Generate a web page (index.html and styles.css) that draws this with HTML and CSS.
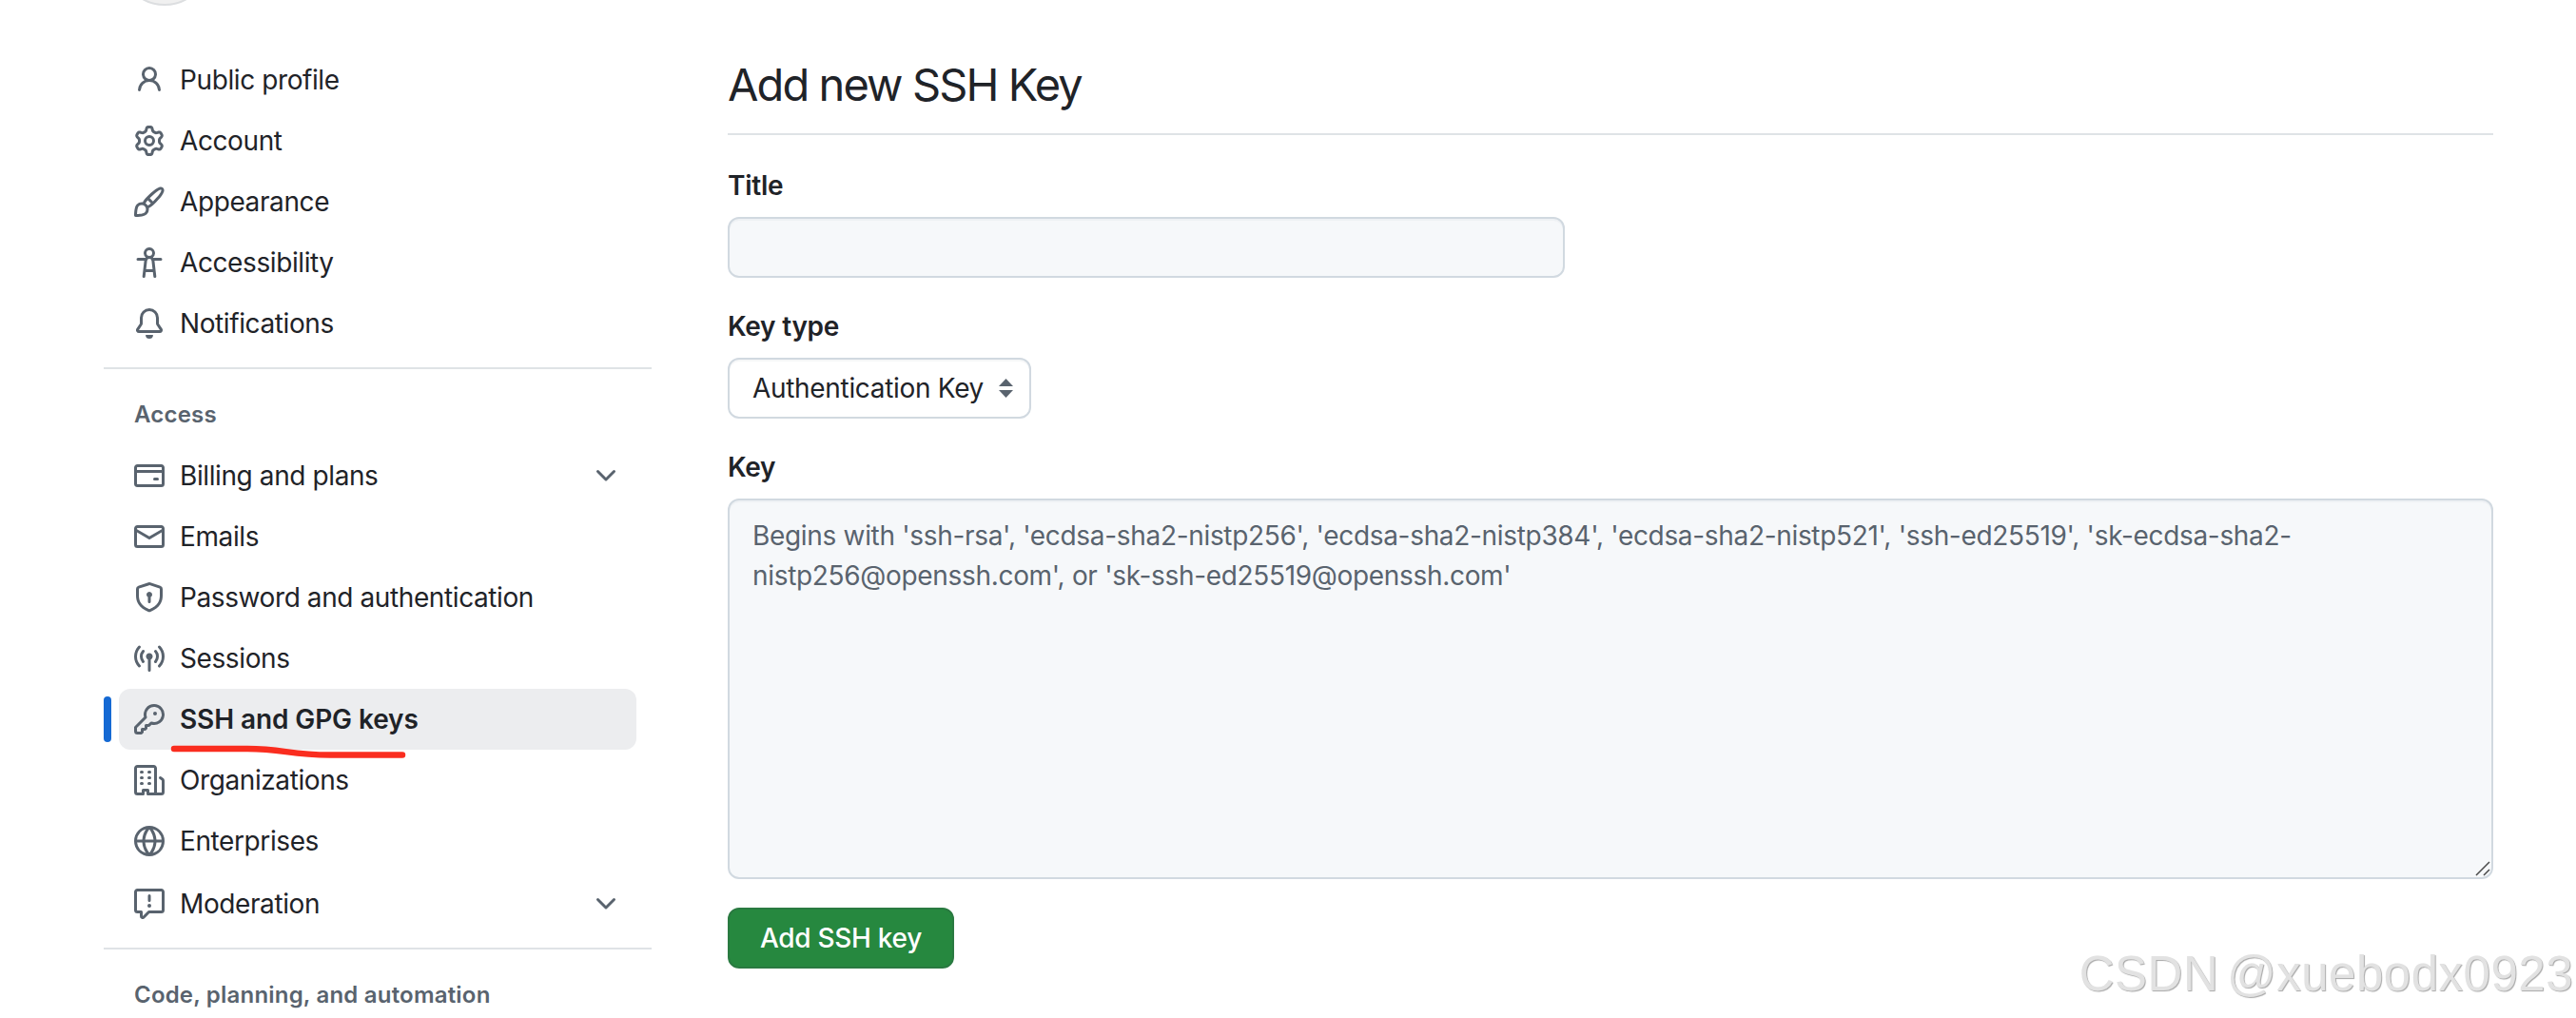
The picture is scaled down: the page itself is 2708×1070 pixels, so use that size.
FILE: index.html
```html
<!DOCTYPE html>
<html lang="en">
<head>
  <meta charset="UTF-8">
  <title>Add new SSH key</title>
  <link rel="stylesheet" href="styles.css">
</head>
<body>
  <div class="sidebar">
    <div class="avatar"></div>

    <ul class="nav-list">
      <li class="nav-item">
        <svg class="icon" viewBox="0 0 16 16"><path d="M10.561 8.073a6.005 6.005 0 0 1 3.432 5.142.75.75 0 1 1-1.498.07 4.5 4.5 0 0 0-8.99 0 .75.75 0 0 1-1.498-.07 6.004 6.004 0 0 1 3.431-5.142 3.999 3.999 0 1 1 5.123 0ZM10.5 5a2.5 2.5 0 1 0-5 0 2.5 2.5 0 0 0 5 0Z"/></svg>
        <span class="nav-label">Public profile</span>
      </li>
      <li class="nav-item">
        <svg class="icon" viewBox="0 0 16 16"><path d="M8 0a8.2 8.2 0 0 1 .701.031C9.444.095 9.99.645 10.16 1.29l.288 1.107c.018.066.079.158.212.224.231.114.454.243.668.386.123.082.233.09.299.071l1.103-.303c.644-.176 1.392.021 1.82.63.27.385.506.792.704 1.218.315.675.111 1.422-.364 1.891l-.814.806c-.049.048-.098.147-.088.294.016.257.016.515 0 .772-.01.147.038.246.088.294l.814.806c.475.469.679 1.216.364 1.891a7.977 7.977 0 0 1-.704 1.217c-.428.61-1.176.807-1.82.63l-1.102-.302c-.067-.019-.177-.011-.3.071a5.909 5.909 0 0 1-.668.386c-.133.066-.194.158-.211.224l-.29 1.106c-.168.646-.715 1.196-1.458 1.26a8.006 8.006 0 0 1-1.402 0c-.743-.064-1.289-.614-1.458-1.26l-.289-1.106c-.018-.066-.079-.158-.212-.224a5.738 5.738 0 0 1-.668-.386c-.123-.082-.233-.09-.299-.071l-1.103.303c-.644.176-1.392-.021-1.82-.63a8.12 8.12 0 0 1-.704-1.218c-.315-.675-.111-1.422.363-1.891l.815-.806c.05-.048.098-.147.088-.294a6.214 6.214 0 0 1 0-.772c.01-.147-.038-.246-.088-.294l-.815-.806C.635 6.045.431 5.298.746 4.623a7.92 7.92 0 0 1 .704-1.217c.428-.61 1.176-.807 1.82-.63l1.102.302c.067.019.177.011.3-.071.214-.143.437-.272.668-.386.133-.066.194-.158.211-.224l.29-1.106C6.009.645 6.556.095 7.299.03 7.53.01 7.764 0 8 0Zm-.571 1.525c-.036.003-.108.036-.137.146l-.289 1.105c-.147.561-.549.967-.998 1.189-.173.086-.34.183-.5.29-.417.278-.97.423-1.529.27l-1.103-.303c-.109-.03-.175.016-.195.045-.22.312-.412.644-.573.99-.014.031-.021.11.059.19l.815.806c.411.406.562.957.53 1.456a4.709 4.709 0 0 0 0 .582c.032.499-.119 1.05-.53 1.456l-.815.806c-.081.08-.073.159-.059.19.162.346.353.677.573.989.02.03.085.076.195.046l1.102-.303c.56-.153 1.113-.008 1.53.27.161.107.328.204.501.29.447.222.85.629.997 1.189l.289 1.105c.029.109.101.143.137.146a6.6 6.6 0 0 0 1.142 0c.036-.003.108-.036.137-.146l.289-1.105c.147-.561.549-.967.998-1.189.173-.086.34-.183.5-.29.417-.278.97-.423 1.529-.27l1.103.303c.109.029.175-.016.195-.045.22-.313.411-.644.573-.99.014-.031.021-.11-.059-.19l-.815-.806c-.411-.406-.562-.957-.53-1.456a4.709 4.709 0 0 0 0-.582c-.032-.499.119-1.05.53-1.456l.815-.806c.081-.08.073-.159.059-.19a6.464 6.464 0 0 0-.573-.989c-.02-.03-.085-.076-.195-.046l-1.102.303c-.56.153-1.113.008-1.53-.27a4.44 4.44 0 0 0-.501-.29c-.447-.222-.85-.629-.997-1.189l-.289-1.105c-.029-.11-.101-.143-.137-.146a6.6 6.6 0 0 0-1.142 0ZM11 8a3 3 0 1 1-6 0 3 3 0 0 1 6 0ZM9.5 8a1.5 1.5 0 1 0-3.001.001A1.5 1.5 0 0 0 9.5 8Z"/></svg>
        <span class="nav-label">Account</span>
      </li>
      <li class="nav-item">
        <svg class="icon" viewBox="0 0 16 16"><path d="M11.134 1.535c.7-.509 1.416-.942 2.076-1.155.649-.21 1.463-.267 2.069.34.603.601.568 1.411.368 2.07-.202.668-.624 1.39-1.125 2.096-1.011 1.424-2.496 2.987-3.775 4.249-1.098 1.084-2.132 1.839-3.04 2.3a3.744 3.744 0 0 1-1.055 3.217c-.431.431-1.065.691-1.657.861-.614.177-1.294.287-1.914.357A21.151 21.151 0 0 1 .797 16H.743l.007-.75H.749L.742 16a.75.75 0 0 1-.743-.742l.743-.008-.742.007v-.054a21.25 21.25 0 0 1 .13-2.284c.067-.647.187-1.287.358-1.914.17-.591.43-1.226.86-1.657a3.746 3.746 0 0 1 3.227-1.054c.466-.893 1.225-1.907 2.314-2.982 1.271-1.255 2.833-2.75 4.246-3.777ZM1.62 13.089c-.051.464-.086.929-.104 1.395.466-.018.932-.053 1.396-.104a10.511 10.511 0 0 0 1.668-.309c.526-.151.856-.325 1.011-.48a2.25 2.25 0 1 0-3.182-3.182c-.155.155-.329.485-.48 1.01a10.515 10.515 0 0 0-.309 1.67Zm10.396-10.34c-1.224.89-2.605 2.189-3.822 3.384l1.718 1.718c1.21-1.205 2.51-2.597 3.387-3.833.47-.662.78-1.227.912-1.662.134-.444.032-.551.009-.575h-.001V1.78c-.014-.014-.113-.113-.548.027-.432.14-.995.462-1.655.942Zm-4.832 7.266-.001.001a9.859 9.859 0 0 0 1.63-1.142L7.155 7.216a9.7 9.7 0 0 0-1.161 1.607c.482.302.889.71 1.19 1.192Z"/></svg>
        <span class="nav-label">Appearance</span>
      </li>
      <li class="nav-item">
        <svg class="icon" viewBox="0 0 16 16"><path d="M9.923 5.302c.063.063.122.129.178.198H14A.75.75 0 0 1 14 7h-3.3l.578 5.163.362 2.997a.75.75 0 0 1-1.49.18L9.868 13H6.132l-.282 2.34a.75.75 0 0 1-1.49-.18l.362-2.997L5.3 7H2a.75.75 0 0 1 0-1.5h3.9a2.54 2.54 0 0 1 .176-.198 3 3 0 1 1 3.847 0ZM9.2 7.073h-.001a1.206 1.206 0 0 0-2.398 0L6.305 11.5h3.39ZM9.5 3a1.5 1.5 0 1 0-3.001.001A1.5 1.5 0 0 0 9.5 3Z"/></svg>
        <span class="nav-label">Accessibility</span>
      </li>
      <li class="nav-item">
        <svg class="icon" viewBox="0 0 16 16"><path d="M8 16a2 2 0 0 0 1.985-1.75c.017-.137-.097-.25-.235-.25h-3.5c-.138 0-.252.113-.235.25A2 2 0 0 0 8 16ZM3 5a5 5 0 0 1 10 0v2.947c0 .05.015.098.042.139l1.703 2.555A1.519 1.519 0 0 1 13.482 13H2.518a1.516 1.516 0 0 1-1.263-2.36l1.703-2.554A.255.255 0 0 0 3 7.947Zm5-3.5A3.5 3.5 0 0 0 4.5 5v2.947c0 .346-.102.683-.294.97l-1.703 2.556a.017.017 0 0 0-.003.01l.001.006c0 .002.002.004.004.006l.006.004.007.001h10.964l.007-.001.006-.004.004-.006.001-.007a.017.017 0 0 0-.003-.01l-1.703-2.554a1.745 1.745 0 0 1-.294-.97V5A3.5 3.5 0 0 0 8 1.5Z"/></svg>
        <span class="nav-label">Notifications</span>
      </li>
    </ul>

    <!-- Access -->
    <div class="divider"></div>
    <h3 class="nav-title">Access</h3>
    <ul class="nav-list">
      <li class="nav-item">
        <svg class="icon" viewBox="0 0 16 16"><path d="M10.75 9a.75.75 0 0 0 0 1.5h1.5a.75.75 0 0 0 0-1.5h-1.5Z"/><path d="M0 3.75C0 2.784.784 2 1.75 2h12.5c.966 0 1.75.784 1.75 1.75v8.5A1.75 1.75 0 0 1 14.25 14H1.75A1.75 1.75 0 0 1 0 12.25ZM14.5 6.5h-13v5.75c0 .138.112.25.25.25h12.5a.25.25 0 0 0 .25-.25Zm0-2.75a.25.25 0 0 0-.25-.25H1.75a.25.25 0 0 0-.25.25V5h13Z"/></svg>
        <span class="nav-label">Billing and plans</span>
        <svg class="icon chevron" viewBox="0 0 16 16"><path d="M12.78 5.22a.749.749 0 0 1 0 1.06l-4.25 4.25a.749.749 0 0 1-1.06 0L3.22 6.28a.749.749 0 1 1 1.06-1.06L8 8.939l3.72-3.719a.749.749 0 0 1 1.06 0Z"/></svg>
      </li>
      <li class="nav-item">
        <svg class="icon" viewBox="0 0 16 16"><path d="M1.75 2h12.5c.966 0 1.75.784 1.75 1.75v8.5A1.75 1.75 0 0 1 14.25 14H1.75A1.75 1.75 0 0 1 0 12.25v-8.5C0 2.784.784 2 1.75 2ZM1.5 12.251c0 .138.112.25.25.25h12.5a.25.25 0 0 0 .25-.25V5.809L8.38 9.397a.75.75 0 0 1-.76 0L1.5 5.809v6.442Zm13-8.181v-.32a.25.25 0 0 0-.25-.25H1.75a.25.25 0 0 0-.25.25v.32L8 7.88Z"/></svg>
        <span class="nav-label">Emails</span>
      </li>
      <li class="nav-item">
        <svg class="icon" viewBox="0 0 16 16"><path d="m8.533.133 5.25 1.68A1.75 1.75 0 0 1 15 3.48V7c0 1.566-.32 3.182-1.303 4.682-.983 1.498-2.585 2.813-5.032 3.855a1.697 1.697 0 0 1-1.33 0c-2.447-1.042-4.049-2.357-5.032-3.855C1.32 10.182 1 8.566 1 7V3.48a1.75 1.75 0 0 1 1.217-1.667l5.25-1.68a1.748 1.748 0 0 1 1.066 0Zm-.61 1.429.001.001-5.25 1.68a.251.251 0 0 0-.174.237V7c0 1.36.275 2.666 1.057 3.859.784 1.194 2.121 2.342 4.366 3.298a.196.196 0 0 0 .154 0c2.245-.957 3.582-2.103 4.366-3.297C13.225 9.666 13.5 8.358 13.5 7V3.48a.25.25 0 0 0-.174-.238l-5.25-1.68a.25.25 0 0 0-.153 0ZM9.5 6.5c0 .536-.286 1.032-.75 1.3v2.45a.75.75 0 0 1-1.5 0V7.8A1.5 1.5 0 1 1 9.5 6.5Z"/></svg>
        <span class="nav-label">Password and authentication</span>
      </li>
      <li class="nav-item">
        <svg class="icon" viewBox="0 0 16 16"><path d="M8.75 8.582v5.668a.75.75 0 0 1-1.5 0V8.582a1.75 1.75 0 1 1 1.5 0Zm3.983-7.125a.75.75 0 0 1 1.06.026A7.976 7.976 0 0 1 16 7c0 2.139-.84 4.083-2.207 5.517a.75.75 0 1 1-1.086-1.034A6.474 6.474 0 0 0 14.5 7a6.474 6.474 0 0 0-1.793-4.483.75.75 0 0 1 .026-1.06Zm-9.466 0c.3.286.312.76.026 1.06A6.474 6.474 0 0 0 1.5 7a6.47 6.47 0 0 0 1.793 4.483.75.75 0 0 1-1.086 1.034A7.973 7.973 0 0 1 0 7c0-2.139.84-4.083 2.207-5.517a.75.75 0 0 1 1.06-.026Zm8.556 2.321A4.988 4.988 0 0 1 13 7a4.988 4.988 0 0 1-1.177 3.222.75.75 0 1 1-1.146-.967A3.487 3.487 0 0 0 11.5 7c0-.86-.309-1.645-.823-2.255a.75.75 0 0 1 1.146-.967Zm-6.492.958A3.48 3.48 0 0 0 4.5 7a3.48 3.48 0 0 0 .823 2.255.75.75 0 0 1-1.146.967A4.981 4.981 0 0 1 3 7a4.982 4.982 0 0 1 1.188-3.236.75.75 0 1 1 1.143.972Z"/></svg>
        <span class="nav-label">Sessions</span>
      </li>
      <li class="nav-item active">
        <svg class="icon" viewBox="0 0 16 16"><path d="M10.5 0a5.499 5.499 0 1 1-1.288 10.848l-.932.932a.749.749 0 0 1-.53.22H7v.75a.749.749 0 0 1-.22.53l-.5.5a.749.749 0 0 1-.53.22H5v.75a.749.749 0 0 1-.22.53l-.5.5a.749.749 0 0 1-.53.22h-2A1.75 1.75 0 0 1 0 14.25v-2c0-.199.079-.389.22-.53l4.932-4.932A5.5 5.5 0 0 1 10.5 0Zm-4 5.5c-.001.431.069.86.205 1.269a.75.75 0 0 1-.181.768L1.5 12.56v1.69c0 .138.112.25.25.25h1.69l.06-.06v-1.19a.75.75 0 0 1 .75-.75h1.19l.06-.06v-1.19a.75.75 0 0 1 .75-.75h1.19l1.023-1.025a.75.75 0 0 1 .768-.18A4 4 0 1 0 6.5 5.5ZM11 6a1 1 0 1 1 0-2 1 1 0 0 1 0 2Z"/></svg>
        <span class="nav-label">SSH and GPG keys</span>
        <svg class="underline" viewBox="0 0 256 20"><path d="M7 7H84C122 7 128 13.5 171 13.5H247"/></svg>
      </li>
      <li class="nav-item">
        <svg class="icon" viewBox="0 0 16 16"><path d="M1.75 16A1.75 1.75 0 0 1 0 14.25V1.75C0 .784.784 0 1.75 0h8.5C11.216 0 12 .784 12 1.75v12.5c0 .085-.006.168-.018.25h2.268a.25.25 0 0 0 .25-.25V8.285a.25.25 0 0 0-.111-.208l-1.055-.703a.749.749 0 1 1 .832-1.248l1.055.703c.487.325.779.871.779 1.456v5.965A1.75 1.75 0 0 1 14.25 16h-3.5a.766.766 0 0 1-.197-.026c-.099.017-.2.026-.303.026h-3a.75.75 0 0 1-.75-.75V14h-1v1.25a.75.75 0 0 1-.75.75Zm-.25-1.75c0 .138.112.25.25.25H4v-1.25a.75.75 0 0 1 .75-.75h2.5a.75.75 0 0 1 .75.75v1.25h2.25a.25.25 0 0 0 .25-.25V1.75a.25.25 0 0 0-.25-.25h-8.5a.25.25 0 0 0-.25.25ZM3.75 6h.5a.75.75 0 0 1 0 1.5h-.5a.75.75 0 0 1 0-1.5ZM3 3.75A.75.75 0 0 1 3.75 3h.5a.75.75 0 0 1 0 1.5h-.5A.75.75 0 0 1 3 3.75Zm4 3A.75.75 0 0 1 7.75 6h.5a.75.75 0 0 1 0 1.5h-.5A.75.75 0 0 1 7 6.75ZM7.75 3h.5a.75.75 0 0 1 0 1.5h-.5a.75.75 0 0 1 0-1.5ZM3 9.75A.75.75 0 0 1 3.75 9h.5a.75.75 0 0 1 0 1.5h-.5A.75.75 0 0 1 3 9.75ZM7.75 9h.5a.75.75 0 0 1 0 1.5h-.5a.75.75 0 0 1 0-1.5Z"/></svg>
        <span class="nav-label">Organizations</span>
      </li>
      <li class="nav-item">
        <svg class="icon" viewBox="0 0 16 16"><path d="M8 0a8 8 0 1 1 0 16A8 8 0 0 1 8 0ZM5.78 8.75a9.64 9.64 0 0 0 1.363 4.177c.255.426.542.832.857 1.215.245-.296.551-.705.857-1.215A9.64 9.64 0 0 0 10.22 8.75Zm4.44-1.5a9.64 9.64 0 0 0-1.363-4.177c-.307-.51-.612-.919-.857-1.215a9.927 9.927 0 0 0-.857 1.215A9.64 9.64 0 0 0 5.78 7.25Zm-5.944 1.5H1.543a6.507 6.507 0 0 0 4.666 5.5c-.123-.181-.24-.365-.352-.552-.715-1.192-1.437-2.874-1.581-4.948Zm-2.733-1.5h2.733c.144-2.074.866-3.756 1.58-4.948.12-.197.237-.381.353-.552a6.507 6.507 0 0 0-4.666 5.5Zm10.181 1.5c-.144 2.074-.866 3.756-1.58 4.948-.12.197-.237.381-.353.552a6.507 6.507 0 0 0 4.666-5.5Zm2.733-1.5a6.507 6.507 0 0 0-4.666-5.5c.123.181.24.365.353.552.714 1.192 1.436 2.874 1.58 4.948Z"/></svg>
        <span class="nav-label">Enterprises</span>
      </li>
      <li class="nav-item moderation">
        <svg class="icon" viewBox="0 0 16 16"><path d="M0 1.75C0 .784.784 0 1.75 0h12.5C15.216 0 16 .784 16 1.75v9.5A1.75 1.75 0 0 1 14.25 13H8.06l-2.573 2.573A1.458 1.458 0 0 1 3 14.543V13H1.75A1.75 1.75 0 0 1 0 11.25Zm1.75-.25a.25.25 0 0 0-.25.25v9.5c0 .138.112.25.25.25h2a.75.75 0 0 1 .75.75v2.19l2.72-2.72a.749.749 0 0 1 .53-.22h6.5a.25.25 0 0 0 .25-.25v-9.5a.25.25 0 0 0-.25-.25Zm7 2.25v2.5a.75.75 0 0 1-1.5 0v-2.5a.75.75 0 0 1 1.5 0ZM9 9a1 1 0 1 1-2 0 1 1 0 0 1 2 0Z"/></svg>
        <span class="nav-label">Moderation</span>
        <svg class="icon chevron" viewBox="0 0 16 16"><path d="M12.78 5.22a.749.749 0 0 1 0 1.06l-4.25 4.25a.749.749 0 0 1-1.06 0L3.22 6.28a.749.749 0 1 1 1.06-1.06L8 8.939l3.72-3.719a.749.749 0 0 1 1.06 0Z"/></svg>
      </li>
    </ul>

    <div class="divider"></div>
    <h3 class="nav-title">Code, planning, and automation</h3>
  </div>

  <div class="content">
    <h1 class="page-title">Add new SSH Key</h1>
    <form class="key-form">
      <label for="title">Title</label>
      <input type="text" id="title" class="field">

      <label for="keyType">Key type</label>
      <div class="select-box">
        <select id="keyType" class="field">
          <option>Authentication Key</option>
        </select>
        <svg class="select-arrows" viewBox="0 0 15 20"><path d="M7.5 0L15 8H0ZM7.5 20L0 12H15Z"/></svg>
      </div>

      <label for="key">Key</label>
      <div class="key-box">
        <textarea id="key" class="field" placeholder="Begins with 'ssh-rsa', 'ecdsa-sha2-nistp256', 'ecdsa-sha2-nistp384', 'ecdsa-sha2-nistp521', 'ssh-ed25519', 'sk-ecdsa-sha2-nistp256@openssh.com', or 'sk-ssh-ed25519@openssh.com'"></textarea>
        <svg class="grip" viewBox="0 0 16 16"><path d="M1 15L15 1M9 15L15 9"/></svg>
      </div>

      <button type="button" class="btn">Add SSH key</button>
    </form>
  </div>

  <div class="watermark">CSDN @xuebodx0923</div>
</body>
</html>
```

FILE: styles.css
```css
* {
  box-sizing: border-box;
}

body {
  display: flex;
  gap: 80px;
  height: 1070px;
  margin: 0;
  padding-left: 109px;
  overflow: hidden;
  background-color: #fff;
  color: #1f2328;
  font-family: Inter, "Liberation Sans", sans-serif;
  font-size: 28px;
}

/* Sidebar */
.sidebar {
  flex: none;
  width: 576px;
}

.avatar {
  width: 96px;
  height: 96px;
  margin: -90px 0 46px 16px;
  border: 2px solid #dcdee0;
  border-radius: 50%;
  background-color: #f0f0f0;
}

.nav-list {
  margin: 0;
  padding: 0 16px;
  list-style: none;
}

.nav-item {
  position: relative;
  display: flex;
  align-items: center;
  height: 64px;
  padding: 0 16px;
  border-radius: 12px;
  letter-spacing: -0.4px;
}

.nav-item.active {
  background-color: #ecedef;
  font-weight: 600;
  letter-spacing: -0.1px;
}

/* Blue mark to the left of the current page */
.nav-item.active::before {
  content: "";
  position: absolute;
  left: -16px;
  top: 8px;
  width: 8px;
  height: 48px;
  border-radius: 12px;
  background-color: #1569d3;
}

.nav-item.moderation {
  margin-top: 2px;
}

.nav-label {
  flex: 1;
  margin-left: 16px;
  white-space: nowrap;
}

.icon {
  flex: none;
  width: 32px;
  height: 32px;
  fill: #59636e;
}

.underline {
  position: absolute;
  left: 51px;
  top: 56px;
  z-index: 1;
  width: 256px;
  height: 20px;
  fill: none;
  stroke: #fa2d1f;
  stroke-width: 6.5;
  stroke-linecap: round;
}

.divider {
  height: 2px;
  margin-top: 14px;
  background-color: #dfe3e6;
}

.nav-title {
  margin: 16px 0 0;
  padding-left: 32px;
  color: #59636e;
  font-size: 24px;
  font-weight: 600;
  line-height: 64px;
  letter-spacing: 0.2px;
}

/* Form */
.content {
  flex: none;
  width: 1856px;
  padding-top: 53px;
}

.page-title {
  margin: 0;
  padding-bottom: 15px;
  border-bottom: 2px solid #dfe3e6;
  font-size: 47px;
  font-weight: 400;
  line-height: 72px;
  letter-spacing: -1.9px;
}

.key-form {
  display: flex;
  flex-direction: column;
  align-items: flex-start;
  padding-top: 2px;
}

.key-form label {
  margin: 30px 0 12px;
  font-weight: 600;
  line-height: 42px;
  letter-spacing: -0.25px;
}

.field {
  display: block;
  margin: 0;
  padding: 0 24px;
  border: 2px solid #d1d9e0;
  border-radius: 12px;
  background-color: #f6f8fa;
  box-shadow: inset 0 2px 0 rgba(208, 215, 222, 0.2);
  color: #1f2328;
  font-family: inherit;
  font-size: 28px;
  letter-spacing: -0.32px;
}

input.field {
  width: 880px;
  height: 64px;
}

.select-box,
.key-box {
  position: relative;
}

select.field {
  width: 319px;
  height: 64px;
  background-color: #fff;
  appearance: none;
}

.select-arrows {
  position: absolute;
  right: 19px;
  top: 22px;
  width: 15px;
  height: 20px;
  fill: #59636e;
}

textarea.field {
  width: 1856px;
  height: 400px;
  padding: 16px 24px;
  line-height: 42px;
  resize: none;
}

textarea.field::placeholder {
  color: #59636e;
}

.grip {
  position: absolute;
  right: 3px;
  bottom: 3px;
  width: 16px;
  height: 16px;
  fill: none;
  stroke: #4a4a4a;
  stroke-width: 1.5;
}

.btn {
  width: 238px;
  height: 64px;
  margin-top: 30px;
  padding: 0;
  border: 2px solid #2a7a41;
  border-radius: 12px;
  background-color: #26883f;
  color: #fff;
  font-family: inherit;
  font-size: 28px;
  font-weight: 500;
  letter-spacing: -0.3px;
}

.watermark {
  position: absolute;
  right: 3px;
  bottom: 16px;
  color: #e2e2e2;
  font-family: "Liberation Sans", sans-serif;
  font-size: 51px;
  line-height: 60px;
  letter-spacing: 0.5px;
  word-spacing: -6px;
  text-shadow: 1px 1px 1px #a8a8a8;
  white-space: nowrap;
}
```
